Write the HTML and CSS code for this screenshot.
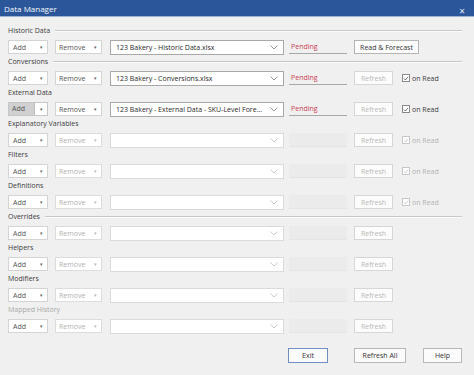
FILE: index.html
```html
<!DOCTYPE html>
<html>
<head>
<meta charset="utf-8">
<link rel="stylesheet" href="styles.css">
</head>
<body>
<div class="window">
  <div class="titlebar">
    <span class="title">Data Manager</span>
    <span class="close">×</span>
  </div>
  <div class="content">
    <div class="section">
      <div class="label">Historic Data <span class="rule"></span></div>
      <div class="row">
        <div class="dd add"><span>Add</span><i class="arr">▾</i></div>
        <div class="dd remove"><span>Remove</span><i class="arr">▾</i></div>
        <div class="combo"><span>123 Bakery - Historic Data.xlsx</span><svg class="chev" viewBox="0 0 8 5" width="8" height="5"><path d="M0.5 0.5 L4 4 L7.5 0.5" fill="none" stroke="#888" stroke-width="0.9"/></svg></div>
        <div class="status pending">Pending</div>
        <div class="btn wide">Read &amp; Forecast</div>
      </div>
    </div>
    <div class="section">
      <div class="label">Conversions <span class="rule"></span></div>
      <div class="row">
        <div class="dd add"><span>Add</span><i class="arr">▾</i></div>
        <div class="dd remove"><span>Remove</span><i class="arr">▾</i></div>
        <div class="combo"><span>123 Bakery - Conversions.xlsx</span><svg class="chev" viewBox="0 0 8 5" width="8" height="5"><path d="M0.5 0.5 L4 4 L7.5 0.5" fill="none" stroke="#888" stroke-width="0.9"/></svg></div>
        <div class="status pending">Pending</div>
        <div class="btn disabled">Refresh</div>
        <div class="check"><span class="box on"><svg viewBox="0 0 8 8" width="8" height="8"><path d="M1.5 4.2 L3.2 6 L6.6 1.8" fill="none" stroke="#333" stroke-width="0.9"/></svg></span>on Read</div>
      </div>
    </div>
    <div class="section">
      <div class="label">External Data</div>
      <div class="row">
        <div class="dd add hover"><span>Add</span><i class="arr">▾</i></div>
        <div class="dd remove"><span>Remove</span><i class="arr">▾</i></div>
        <div class="combo"><span>123 Bakery - External Data - SKU-Level Fore...</span><svg class="chev" viewBox="0 0 8 5" width="8" height="5"><path d="M0.5 0.5 L4 4 L7.5 0.5" fill="none" stroke="#888" stroke-width="0.9"/></svg></div>
        <div class="status pending">Pending</div>
        <div class="btn disabled">Refresh</div>
        <div class="check"><span class="box on"><svg viewBox="0 0 8 8" width="8" height="8"><path d="M1.5 4.2 L3.2 6 L6.6 1.8" fill="none" stroke="#333" stroke-width="0.9"/></svg></span>on Read</div>
      </div>
    </div>
    <div class="section">
      <div class="label">Explanatory Variables</div>
      <div class="row">
        <div class="dd add"><span>Add</span><i class="arr">▾</i></div>
        <div class="dd remove off"><span>Remove</span><i class="arr">▾</i></div>
        <div class="combo off"><span></span><svg class="chev" viewBox="0 0 8 5" width="8" height="5"><path d="M0.5 0.5 L4 4 L7.5 0.5" fill="none" stroke="#c4c4c4" stroke-width="0.9"/></svg></div>
        <div class="status empty"></div>
        <div class="btn disabled">Refresh</div>
        <div class="check off"><span class="box"><svg viewBox="0 0 8 8" width="8" height="8"><path d="M1.5 4.2 L3.2 6 L6.6 1.8" fill="none" stroke="#b5b5b5" stroke-width="0.9"/></svg></span>on Read</div>
      </div>
    </div>
    <div class="section">
      <div class="label">Filters</div>
      <div class="row">
        <div class="dd add"><span>Add</span><i class="arr">▾</i></div>
        <div class="dd remove off"><span>Remove</span><i class="arr">▾</i></div>
        <div class="combo off"><span></span><svg class="chev" viewBox="0 0 8 5" width="8" height="5"><path d="M0.5 0.5 L4 4 L7.5 0.5" fill="none" stroke="#c4c4c4" stroke-width="0.9"/></svg></div>
        <div class="status empty"></div>
        <div class="btn disabled">Refresh</div>
        <div class="check off"><span class="box"><svg viewBox="0 0 8 8" width="8" height="8"><path d="M1.5 4.2 L3.2 6 L6.6 1.8" fill="none" stroke="#b5b5b5" stroke-width="0.9"/></svg></span>on Read</div>
      </div>
    </div>
    <div class="section">
      <div class="label">Definitions</div>
      <div class="row">
        <div class="dd add"><span>Add</span><i class="arr">▾</i></div>
        <div class="dd remove off"><span>Remove</span><i class="arr">▾</i></div>
        <div class="combo off"><span></span><svg class="chev" viewBox="0 0 8 5" width="8" height="5"><path d="M0.5 0.5 L4 4 L7.5 0.5" fill="none" stroke="#c4c4c4" stroke-width="0.9"/></svg></div>
        <div class="status empty"></div>
        <div class="btn disabled">Refresh</div>
        <div class="check off"><span class="box"><svg viewBox="0 0 8 8" width="8" height="8"><path d="M1.5 4.2 L3.2 6 L6.6 1.8" fill="none" stroke="#b5b5b5" stroke-width="0.9"/></svg></span>on Read</div>
      </div>
    </div>
    <div class="section">
      <div class="label">Overrides <span class="rule"></span></div>
      <div class="row">
        <div class="dd add"><span>Add</span><i class="arr">▾</i></div>
        <div class="dd remove off"><span>Remove</span><i class="arr">▾</i></div>
        <div class="combo off"><span></span><svg class="chev" viewBox="0 0 8 5" width="8" height="5"><path d="M0.5 0.5 L4 4 L7.5 0.5" fill="none" stroke="#c4c4c4" stroke-width="0.9"/></svg></div>
        <div class="status empty"></div>
        <div class="btn disabled">Refresh</div>
      </div>
    </div>
    <div class="section">
      <div class="label">Helpers</div>
      <div class="row">
        <div class="dd add"><span>Add</span><i class="arr">▾</i></div>
        <div class="dd remove off"><span>Remove</span><i class="arr">▾</i></div>
        <div class="combo off"><span></span><svg class="chev" viewBox="0 0 8 5" width="8" height="5"><path d="M0.5 0.5 L4 4 L7.5 0.5" fill="none" stroke="#c4c4c4" stroke-width="0.9"/></svg></div>
        <div class="status empty"></div>
        <div class="btn disabled">Refresh</div>
      </div>
    </div>
    <div class="section">
      <div class="label">Modifiers</div>
      <div class="row">
        <div class="dd add"><span>Add</span><i class="arr">▾</i></div>
        <div class="dd remove off"><span>Remove</span><i class="arr">▾</i></div>
        <div class="combo off"><span></span><svg class="chev" viewBox="0 0 8 5" width="8" height="5"><path d="M0.5 0.5 L4 4 L7.5 0.5" fill="none" stroke="#c4c4c4" stroke-width="0.9"/></svg></div>
        <div class="status empty"></div>
        <div class="btn disabled">Refresh</div>
      </div>
    </div>
    <div class="section">
      <div class="label muted">Mapped History</div>
      <div class="row">
        <div class="dd add"><span>Add</span><i class="arr">▾</i></div>
        <div class="dd remove off"><span>Remove</span><i class="arr">▾</i></div>
        <div class="combo off"><span></span><svg class="chev" viewBox="0 0 8 5" width="8" height="5"><path d="M0.5 0.5 L4 4 L7.5 0.5" fill="none" stroke="#c4c4c4" stroke-width="0.9"/></svg></div>
        <div class="status empty"></div>
        <div class="btn disabled">Refresh</div>
      </div>
    </div>
    <div class="footer">
      <div class="btn exit">Exit</div>
      <div class="btn refall">Refresh All</div>
      <div class="btn help">Help</div>
    </div>
  </div>
</div>
</body>
</html>
```

FILE: styles.css
```css
html, body {
  margin: 0;
  padding: 0;
  background: #f0f0f0;
}
body {
  width: 474px;
  height: 375px;
  overflow: hidden;
  font-family: "Open Sans", "Noto Sans", sans-serif;
  font-size: 7px;
  color: #3c3c3c;
}
.window {
  width: 474px;
  height: 375px;
}
.titlebar {
  height: 16px;
  background: #2b579a;
  border-bottom: 1px solid #9fb3d1;
  display: flex;
  align-items: center;
  justify-content: space-between;
  padding: 0 9px 0 4px;
  color: #fff;
}
.title {
  font-size: 8px;
  color: #f4f7fb;
}
.close {
  font-size: 10px;
  line-height: 10px;
  color: #e8eef7;
  padding-top: 6px;
}
.content {
  padding: 8px 12px 0 8px;
}
.section {
  margin-bottom: 1px;
}
.label {
  height: 12px;
  line-height: 12px;
  display: flex;
  align-items: center;
  margin-bottom: 2px;
  white-space: nowrap;
  color: #3c3c3c;
}
.label.muted {
  color: #a8a8a8;
}
.rule {
  flex: 1;
  height: 0;
  border-top: 1px solid #c8c8c8;
  border-bottom: 1px solid #fbfbfb;
  margin-left: 5px;
}
.row {
  height: 16px;
  display: flex;
  align-items: center;
}
.dd {
  height: 14px;
  box-sizing: border-box;
  border: 1px solid #d4d4d4;
  background: #fff;
  display: flex;
  align-items: center;
  justify-content: space-between;
  padding: 0 4px 0 4px;
  color: #555;
}
.dd .arr {
  font-style: normal;
  font-size: 5px;
  color: #666;
}
.add {
  width: 40px;
  margin-right: 7px;
}
.add.hover {
  padding: 0 4px 0 0;
  border-color: #c6c6c6;
}
.add.hover span {
  background: #d0d0d0;
  height: 12px;
  line-height: 12px;
  width: 26px;
  padding-left: 3px;
  box-sizing: border-box;
  border-right: 1px solid #c0c0c0;
}
.remove {
  width: 47px;
  margin-right: 8px;
  padding-left: 3px;
}
.remove.off {
  color: #b0b0b0;
  border-color: #dcdcdc;
}
.remove.off .arr {
  color: #b8b8b8;
}
.combo {
  width: 174px;
  height: 15px;
  box-sizing: border-box;
  border: 1px solid #a8a8a8;
  background: #fff;
  display: flex;
  align-items: center;
  justify-content: space-between;
  padding: 0 5px 0 5px;
  margin-right: 5px;
  color: #2a2a2a;
  white-space: nowrap;
}
.combo.off {
  border-color: #dadada;
}
.status {
  width: 58px;
  height: 14px;
  box-sizing: border-box;
  margin-right: 7px;
  padding-left: 2px;
  display: flex;
  align-items: center;
  border-bottom: 1px solid #a8a8a8;
}
.status.pending {
  color: #cc4050;
}
.status.empty {
  background: #ebebeb;
  border-bottom: 1px solid #e4e4e4;
}
.btn {
  height: 14px;
  box-sizing: border-box;
  border: 1px solid #b4b4b4;
  background: #fdfdfd;
  display: flex;
  align-items: center;
  justify-content: center;
  color: #333;
  white-space: nowrap;
}
.btn.wide {
  width: 65px;
}
.btn.disabled {
  width: 39px;
  color: #b8b8b8;
  border-color: #d6d6d6;
  background: #fcfcfc;
}
.check {
  display: flex;
  align-items: center;
  margin-left: 9px;
  color: #3c3c3c;
}
.check .box {
  width: 8px;
  height: 8px;
  box-sizing: border-box;
  border: 1px solid #8a8a8a;
  background: #fff;
  margin-right: 2px;
  display: flex;
  align-items: center;
  justify-content: center;
}
.check .box svg {
  width: 7px;
  height: 7px;
}
.check.off {
  color: #b2b2b2;
}
.check.off .box {
  border-color: #c8c8c8;
}
.footer {
  display: flex;
  margin-top: 14px;
  padding-left: 280px;
}
.footer .btn {
  height: 15px;
  background: #fbfbfb;
  border-color: #b8b8b8;
}
.exit {
  width: 40px;
  border-color: #6f8fc0 !important;
  margin-right: 26px;
}
.refall {
  width: 52px;
  margin-right: 17px;
}
.help {
  width: 39px;
}
```
